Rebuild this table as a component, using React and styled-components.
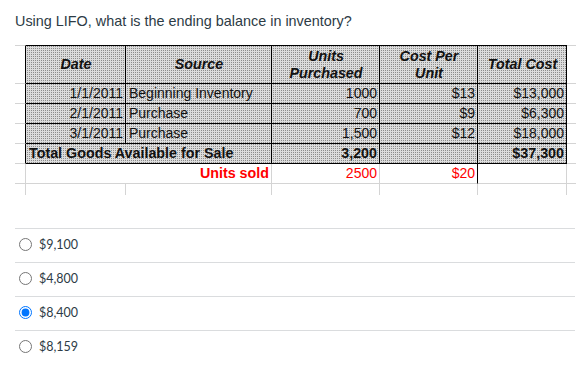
import styled, { createGlobalStyle, css } from "styled-components";

//
//  LIFO quiz question: spreadsheet picture of the purchases, then the answer list.
//

const GlobalStyle = createGlobalStyle`
body {
    margin: 0;
    background: #fff;
}
`

const lines = { k: "#000", g: "#d4d4d4" };

const columns = [11, 100, 146, 108, 98, 89, 9];

const rows = [
    { date: "1/1/2011", source: "Beginning Inventory", units: "1000", cost: "$13", total: "$13,000" },
    { date: "2/1/2011", source: "Purchase", units: "700", cost: "$9", total: "$6,300" },
    { date: "3/1/2011", source: "Purchase", units: "1,500", cost: "$12", total: "$18,000" },
];

const answers = [
    { value: "9100", label: "$9,100" },
    { value: "4800", label: "$4,800" },
    { value: "8400", label: "$8,400", checked: true },
    { value: "8159", label: "$8,159" },
];

const App = () => {
    return (
        <>
            <GlobalStyle />
            <Page>
                <Question>Using LIFO, what is the ending balance in inventory?</Question>
                <Sheet>
                    <colgroup>
                        {columns.map((w, i) => <Col key={i} $w={w} />)}
                    </colgroup>
                    <tbody>
                        <HeadRow>
                            <Cell $t="g" $r="k" $b="g" />
                            <Head $t="k" $r="k" $b="k">Date</Head>
                            <Head $t="k" $r="k" $b="k">Source</Head>
                            <Head $t="k" $r="k" $b="k">Units<br />Purchased</Head>
                            <Head $t="k" $r="k" $b="k">Cost Per<br />Unit</Head>
                            <Head $t="k" $r="k" $b="k">Total Cost</Head>
                            <Cell $t="g" $b="g" />
                        </HeadRow>
                        {rows.map((row) => (
                            <Row key={row.date}>
                                <Cell $r="k" $b="g" />
                                <Cell $shade $align="right" $r="k" $b="k">{row.date}</Cell>
                                <Cell $shade $r="k" $b="k">{row.source}</Cell>
                                <Cell $shade $align="right" $r="k" $b="k">{row.units}</Cell>
                                <Cell $shade $align="right" $r="k" $b="k">{row.cost}</Cell>
                                <Cell $shade $align="right" $r="k" $b="k">{row.total}</Cell>
                                <Cell $b="g" />
                            </Row>
                        ))}
                        <Row>
                            <Cell $r="k" $b="g" />
                            <Cell $shade $bold colSpan={2} $r="k" $b="k">Total Goods Available for Sale</Cell>
                            <Cell $shade $bold $align="right" $r="k" $b="k">3,200</Cell>
                            <Cell $shade $r="k" $b="k" />
                            <Cell $shade $bold $align="right" $r="k" $b="k">$37,300</Cell>
                            <Cell $b="g" />
                        </Row>
                        <Row>
                            <Cell $r="g" $b="g" />
                            <Cell $red $bold colSpan={2} $align="right" $r="g" $b="g">Units sold</Cell>
                            <Cell $red $align="right" $r="g" $b="g">2500</Cell>
                            <Cell $red $align="right" $r="k" $b="g">$20</Cell>
                            <Cell $r="g" $b="g" />
                            <Cell $b="g" />
                        </Row>
                        <CutRow>
                            <Cell $r="g" />
                            <Cell $r="g" />
                            <Cell $r="g" />
                            <Cell $r="g" />
                            <Cell $r="g" />
                            <Cell $r="g" />
                            <Cell />
                        </CutRow>
                    </tbody>
                </Sheet>
                <Answers>
                    {answers.map((a) => (
                        <Answer key={a.value}>
                            <Radio type="radio" name="lifo" value={a.value} defaultChecked={a.checked} />
                            <span>{a.label}</span>
                        </Answer>
                    ))}
                </Answers>
            </Page>
        </>
    )
}

const Page = styled.div`
padding: 11px 10px 0 15px;
`

const Question = styled.div`
font-family: "Liberation Sans", Arial, sans-serif;
font-size: 14.4px;
line-height: 20px;
color: #2d3b45;
`

const Sheet = styled.table`
margin-top: 14px;
width: 561px;
table-layout: fixed;
border-collapse: separate;
border-spacing: 0;
font-family: "Liberation Sans", Arial, sans-serif;
font-size: 14px;
color: #111;
`

const Col = styled.col`
width: ${(p) => p.$w}px;
`

const HeadRow = styled.tr`
height: 39px;
`

const Row = styled.tr`
height: 20px;
`

const CutRow = styled.tr`
height: 11px;
`

const stipple = css`
background-color: #dcdcdc;
background-image: conic-gradient(#8c8c8c 0 25%, transparent 0);
background-size: 2px 2px;
`

const Cell = styled.td`
box-sizing: border-box;
padding: 0 2px 0 3px;
line-height: 19px;
white-space: nowrap;
overflow: visible;
vertical-align: middle;
text-align: ${(p) => p.$align || "left"};
font-weight: ${(p) => (p.$bold ? "bold" : "normal")};
color: ${(p) => (p.$red ? "#f00" : "inherit")};
${(p) => p.$bold && "font-size: 14.3px;"}
${(p) => p.$shade && stipple}
border-top: ${(p) => (p.$t ? `1px solid ${lines[p.$t]}` : "0")};
border-right: ${(p) => (p.$r ? `1px solid ${lines[p.$r]}` : "0")};
border-bottom: ${(p) => (p.$b ? `1px solid ${lines[p.$b]}` : "0")};
`

const Head = styled(Cell).attrs({ $shade: true, $bold: true, $align: "center" })`
font-style: italic;
font-size: 14.3px;
line-height: 17px;
`

const Answers = styled.div`
margin-top: 33px;
`

const Answer = styled.label`
display: flex;
align-items: center;
box-sizing: border-box;
height: 34px;
padding: 0 0 2px 4px;
border-top: 1px solid #dadcde;
font-family: Lato, "Open Sans", sans-serif;
font-size: 12.5px;
color: #2d3b45;
`

const Radio = styled.input`
width: 13px;
height: 13px;
margin: 0 7px 0 0;
`

export default App;
